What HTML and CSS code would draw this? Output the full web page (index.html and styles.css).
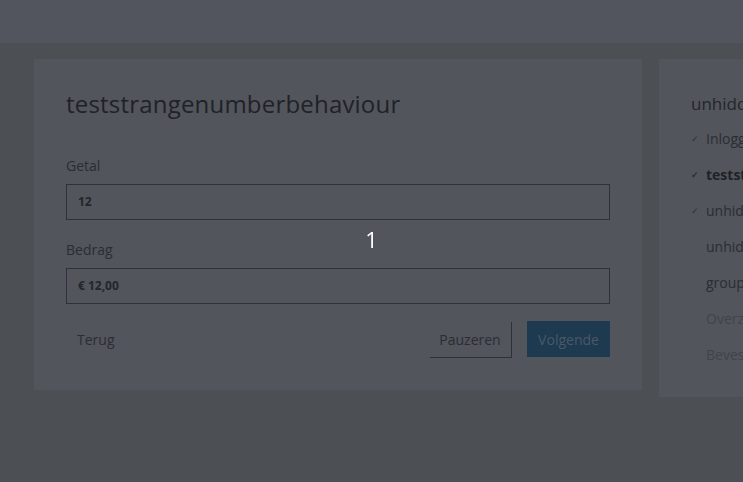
FILE: index.html
```html
<!DOCTYPE html>
<html lang="nl">
<head>
<meta charset="utf-8">
<title>teststrangenumberbehaviour</title>
<link rel="stylesheet" href="styles.css">
</head>
<body>
<header class="topbar"></header>
<main class="layout">
  <section class="card form-card">
    <h1 class="title">teststrangenumberbehaviour</h1>
    <div class="field">
      <label class="label">Getal</label>
      <div class="input">12</div>
    </div>
    <div class="field">
      <label class="label">Bedrag</label>
      <div class="input">€ 12,00</div>
    </div>
    <div class="actions">
      <button class="btn btn-link">Terug</button>
      <div class="actions-right">
        <button class="btn btn-secondary">Pauzeren</button>
        <button class="btn btn-primary">Volgende</button>
      </div>
    </div>
  </section>
  <aside class="card side-card">
    <h2 class="side-title">unhiddenstappen</h2>
    <ul class="steps">
      <li class="step done"><span class="check">✓</span>Inloggen</li>
      <li class="step done current"><span class="check">✓</span>teststrangenumberbehaviour</li>
      <li class="step done"><span class="check">✓</span>unhidden</li>
      <li class="step"><span class="check"></span>unhidden2</li>
      <li class="step"><span class="check"></span>group</li>
      <li class="step muted"><span class="check"></span>Overzicht</li>
      <li class="step muted"><span class="check"></span>Bevestiging</li>
    </ul>
  </aside>
</main>
<div class="overlay"><span class="counter">1</span></div>
</body>
</html>
```

FILE: styles.css
```css
* { box-sizing: border-box; }
html, body { margin: 0; padding: 0; }
body {
  background: #4c4f54;
  font-family: "Open Sans", "Noto Sans", sans-serif;
  color: #2a2d33;
  width: 743px;
  height: 482px;
  overflow: hidden;
}
.topbar {
  height: 43px;
  background: #52555d;
}
.layout {
  display: flex;
  gap: 17px;
  padding: 16px 0 0 34px;
  align-items: flex-start;
}
.card {
  background: #52555c;
}
.form-card {
  width: 608px;
  height: 331px;
  flex: none;
  padding: 29px 32px 0 32px;
}
.title {
  margin: 0 0 36px 0;
  font-weight: 400;
  font-size: 24px;
  line-height: 32px;
  color: #1f2227;
  letter-spacing: 0.2px;
}
.field { margin-bottom: 20px; }
.label {
  display: block;
  font-size: 14px;
  line-height: 20px;
  color: #2a2d33;
  margin-bottom: 8px;
}
.input {
  height: 36px;
  border: 1px solid #2e3136;
  padding: 0 11px;
  font-size: 12px;
  font-weight: 700;
  line-height: 34px;
  color: #23262b;
}
.actions {
  display: flex;
  justify-content: space-between;
  align-items: center;
  margin-top: -3px;
}
.actions-right { display: flex; gap: 16px; }
.btn {
  font-family: inherit;
  font-size: 14px;
  height: 36px;
  border: 0;
  background: transparent;
  padding: 0 10px;
  color: #2a2d33;
}
.btn-link { padding: 0 11px; }
.btn-secondary {
  width: 82px;
  box-shadow: 1px 1px 0 #2e3136;
}
.btn-primary {
  width: 83px;
  background: #1d3a50;
  color: #4b5866;
}
.side-card {
  flex: none;
  width: 120px;
  height: 338px;
  padding: 32px 0 0 32px;
}
.side-title {
  margin: 0 0 3px 0;
  font-weight: 400;
  font-size: 17px;
  line-height: 26px;
  color: #23262b;
  white-space: nowrap;
}
.steps {
  list-style: none;
  margin: 0;
  padding: 0;
}
.step {
  display: flex;
  align-items: center;
  height: 36px;
  font-size: 14px;
  color: #2a2d33;
  white-space: nowrap;
}
.step.current { font-weight: 700; color: #1f2227; }
.step.muted { color: #41444b; }
.check {
  width: 15px;
  flex: none;
  font-size: 9px;
  color: #2a2d33;
}
.overlay {
  position: fixed;
  inset: 0;
  display: flex;
  align-items: center;
  justify-content: center;
}
.counter {
  color: #ffffff;
  font-size: 22px;
  margin-bottom: 4px;
}
```
